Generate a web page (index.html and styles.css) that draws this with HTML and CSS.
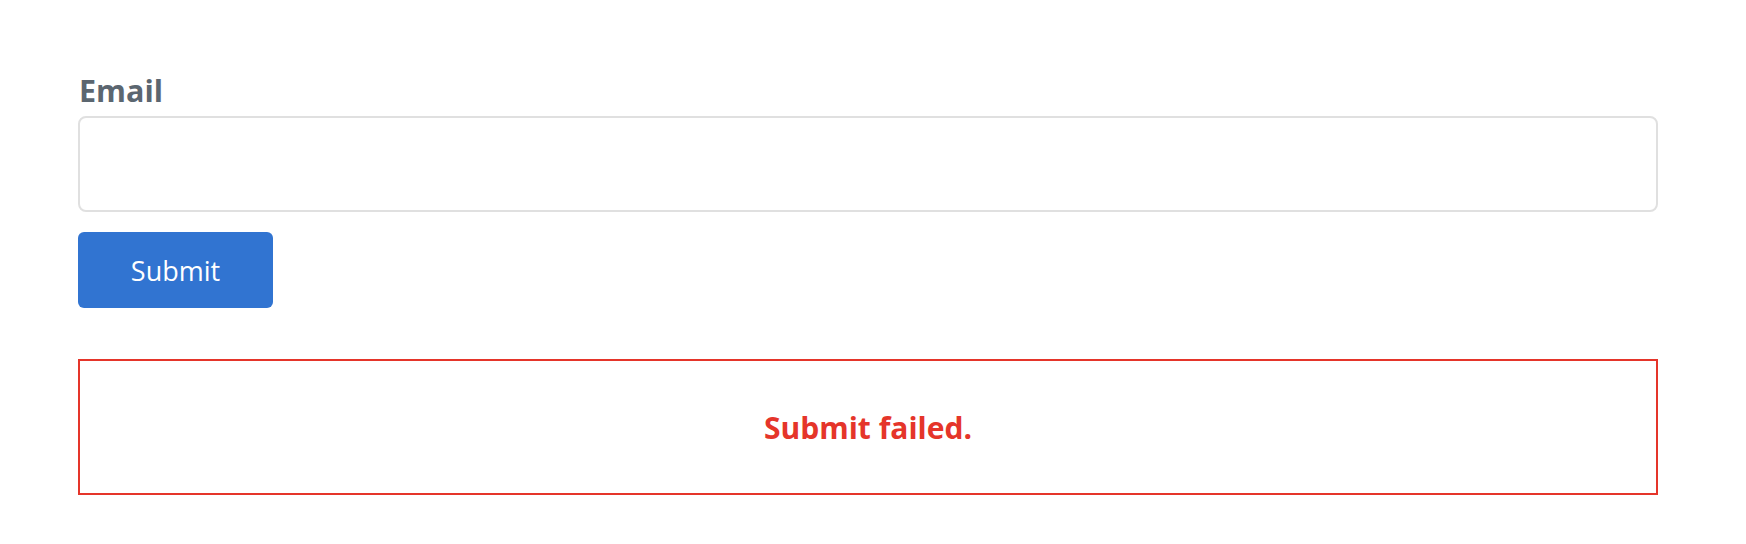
FILE: index.html
```html
<!DOCTYPE html>
<html>
<head>
  <title>Email form</title>
  <link rel="stylesheet" href="styles.css">
</head>
<body>
  <div class="form-wrap">
    <form class="email-form">
      <label for="email" class="field-label">Email</label>
      <input type="email" id="email" class="field-input">
      <button type="submit" class="submit-btn">Submit</button>
    </form>
    <div class="error-box">Submit failed.</div>
  </div>
</body>
</html>
```

FILE: styles.css
```css
body {
  margin: 0;
  background-color: #fff;
  font-family: "Open Sans", "Noto Sans", sans-serif;
}

.form-wrap {
  margin: 0 88px 0 78px;
  padding-top: 70px;
}

.field-label {
  display: block;
  font-size: 30.5px;
  font-weight: bold;
  color: #5b6670;
  line-height: 40px;
  margin-bottom: 6px;
  padding-left: 1px;
}

.field-input {
  display: block;
  box-sizing: border-box;
  width: 100%;
  height: 96px;
  border: 2px solid #e0e0e0;
  border-radius: 8px;
  font-size: 26px;
  padding: 0 20px;
  outline: none;
}

.submit-btn {
  display: block;
  margin-top: 20px;
  width: 195px;
  height: 76px;
  background-color: #3174d1;
  color: #fff;
  border: none;
  border-radius: 6px;
  font-family: "Open Sans", "Noto Sans", sans-serif;
  font-size: 27px;
  cursor: pointer;
}

.error-box {
  box-sizing: border-box;
  margin-top: 51px;
  height: 136px;
  border: 2px solid #e5352a;
  color: #e5352a;
  font-size: 30px;
  font-weight: bold;
  display: flex;
  justify-content: center;
  align-items: center;
}
```
